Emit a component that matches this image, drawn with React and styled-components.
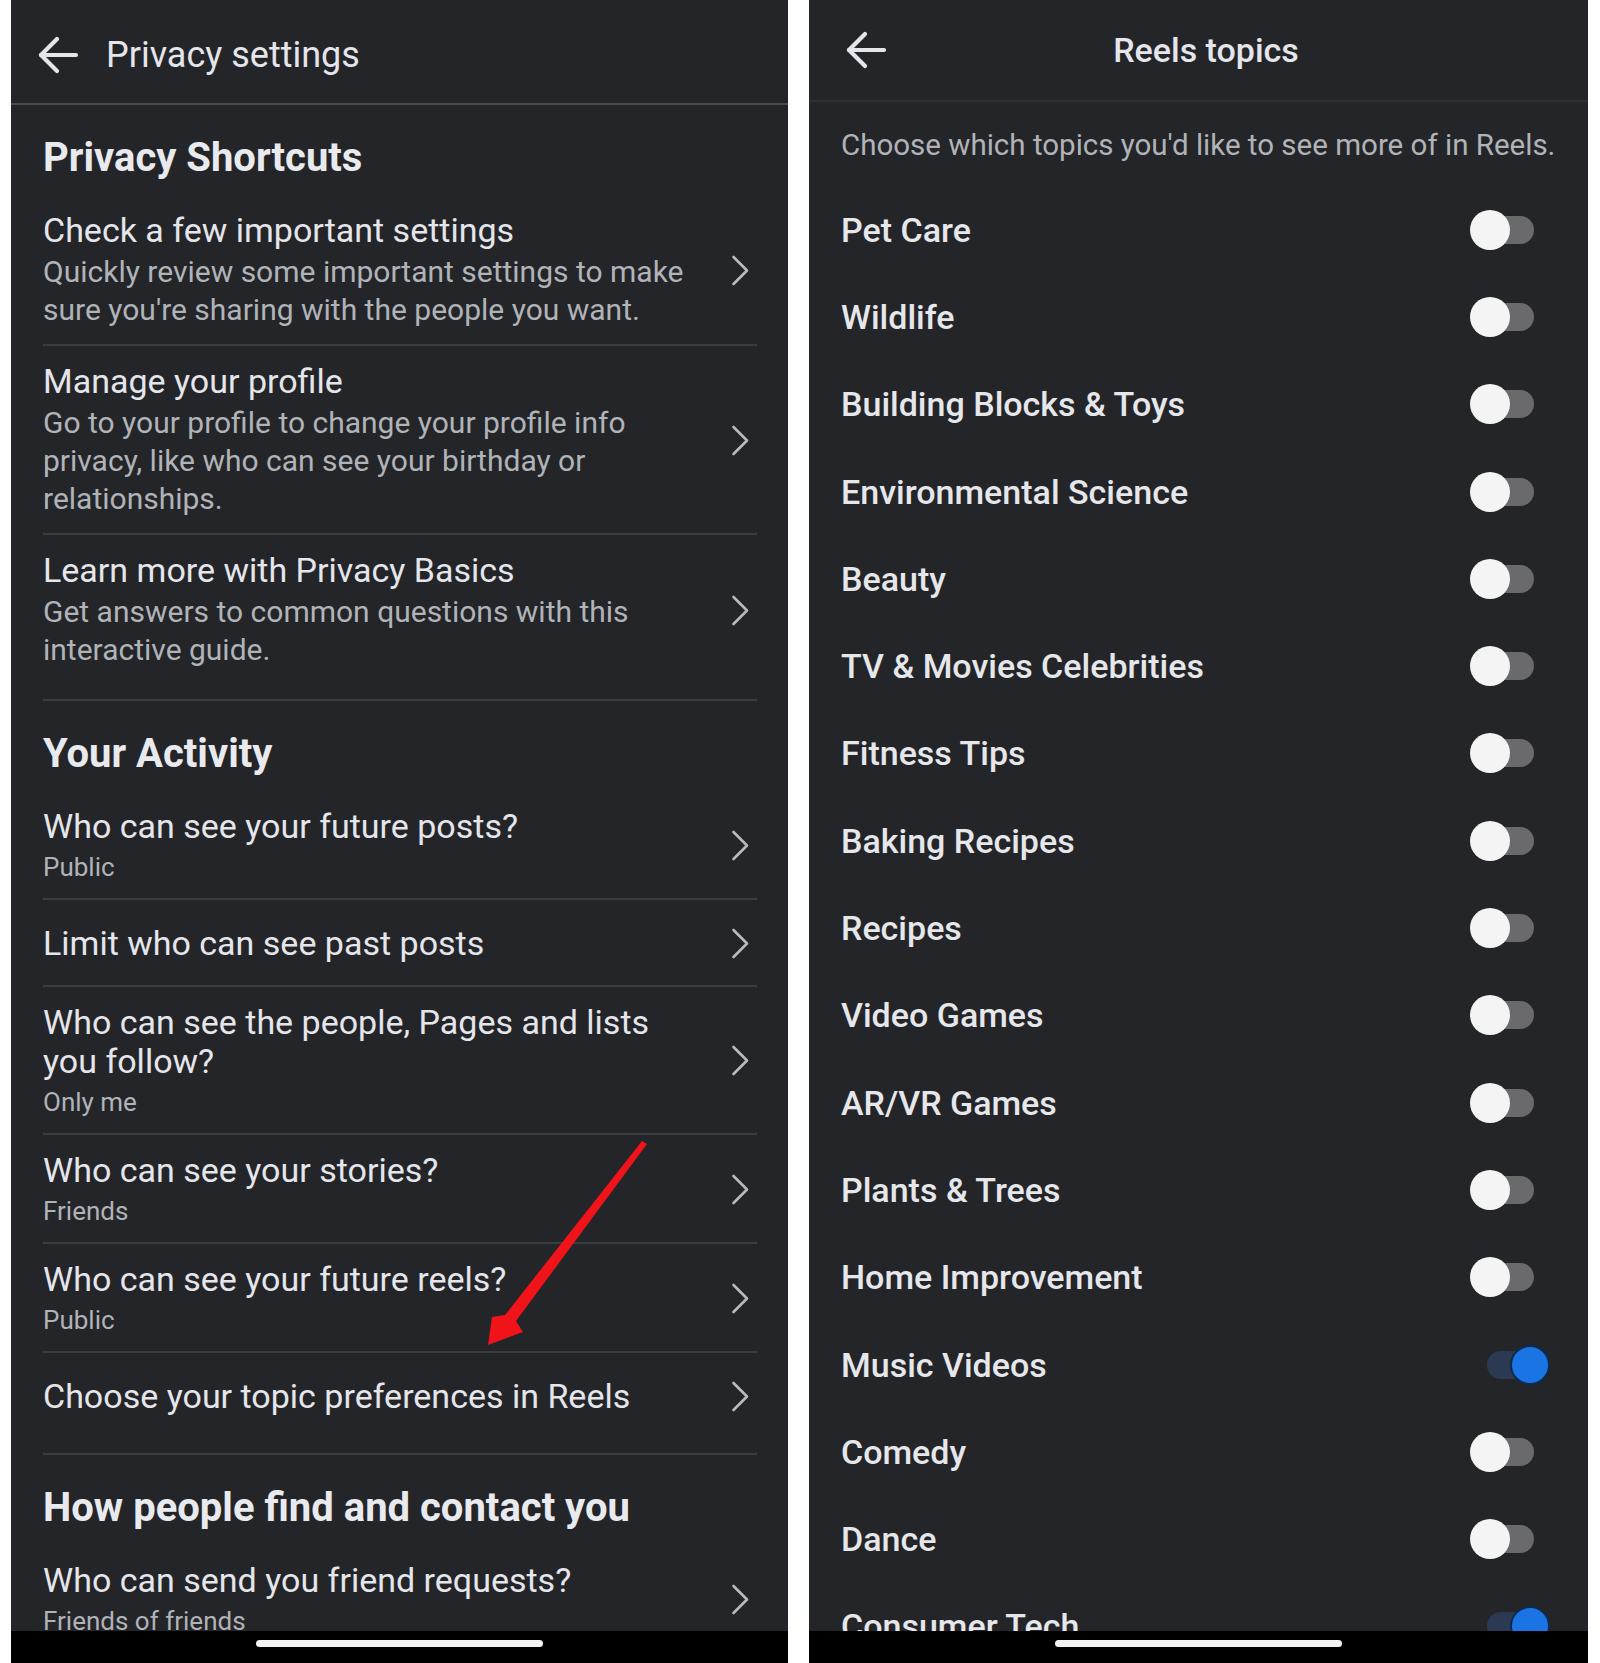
import React from "react";
import styled, { createGlobalStyle } from "styled-components";

const GlobalStyle = createGlobalStyle`
  html, body {
    margin: 0;
    padding: 0;
    background: #ffffff;
  }
  body {
    font-family: Roboto, "Liberation Sans", sans-serif;
    -webkit-font-smoothing: antialiased;
  }
`;

const Page = styled.div`
  display: flex;
  gap: 21px;
  height: 1663px;
  padding-left: 11px;
  background: #ffffff;
`;

const Phone = styled.section`
  position: relative;
  width: ${(p) => p.$width}px;
  height: 100%;
  flex: none;
  display: flex;
  flex-direction: column;
  background: #242528;
  overflow: hidden;
`;

const Screen = styled.div`
  flex: 1;
  min-height: 0;
  overflow: hidden;
`;

const HomeBar = styled.div`
  flex: none;
  height: 32px;
  box-sizing: border-box;
  padding-top: 9px;
  display: flex;
  justify-content: center;
  background: #000000;

  &::after {
    content: "";
    width: 287px;
    height: 7px;
    border-radius: 4px;
    background: #f2f2f2;
  }
`;

const Header = styled.header`
  flex: none;
  box-sizing: border-box;
  height: ${(p) => p.$height}px;
  display: flex;
  align-items: center;
  gap: 27px;
  padding: ${(p) => p.$pad};
  border-bottom: 2px solid ${(p) => p.$line};
`;

const HeaderTitle = styled.h1`
  margin: 0;
  flex: ${(p) => (p.$center ? 1 : "none")};
  text-align: ${(p) => (p.$center ? "center" : "left")};
  font-size: ${(p) => (p.$center ? 34 : 36)}px;
  font-weight: ${(p) => (p.$center ? 500 : 400)};
  line-height: 42px;
  color: #e4e6eb;
`;

const BackIcon = styled.svg`
  flex: none;
  width: 42px;
  height: 38px;
`;

/* ---------- privacy settings ---------- */

const Section = styled.div`
  margin: 0 31px 0 32px;
  padding-bottom: 15px;
  border-bottom: 2px solid #3c3d40;
`;

const SectionTitle = styled.h2`
  margin: 0;
  padding: 31px 0 15px;
  font-size: 40px;
  font-weight: 700;
  line-height: 44px;
  color: #e9eaee;
`;

const Row = styled.div`
  display: flex;
  align-items: center;
  min-height: 54px;
  padding: 16px 0 15px;
  border-bottom: 2px solid #3c3d40;

  &:last-child {
    border-bottom: none;
  }
`;

const RowText = styled.div`
  flex: 1;
  min-width: 0;
`;

const RowTitle = styled.div`
  font-size: 34px;
  line-height: 39px;
  color: #e4e6eb;
`;

const RowNote = styled.div`
  margin-top: ${(p) => (p.$small ? 5 : 3)}px;
  font-size: ${(p) => (p.$small ? 26 : 30)}px;
  line-height: ${(p) => (p.$small ? 32 : 38)}px;
  color: #b0b3b8;
`;

const Chevron = styled.svg`
  flex: none;
  width: 18px;
  height: 31px;
  margin: 0 8px 0 16px;
`;

const Annotation = styled.svg`
  position: absolute;
  left: 0;
  top: 0;
  width: 777px;
  height: 1663px;
  pointer-events: none;
`;

/* ---------- reels topics ---------- */

const Intro = styled.p`
  margin: 0;
  padding: 27px 0 24px 32px;
  font-size: 29.5px;
  line-height: 33px;
  color: #b0b3b8;
  white-space: nowrap;
`;

const TopicRow = styled.div`
  display: flex;
  align-items: center;
  justify-content: space-between;
  height: 87.3px;
  padding: 0 38px 0 32px;
`;

const TopicName = styled.span`
  font-size: 34px;
  font-weight: 500;
  color: #e6e7eb;
`;

const Toggle = styled.span`
  position: relative;
  flex: none;
  width: 80px;
  height: 40px;

  &::before {
    content: "";
    position: absolute;
    left: 17px;
    right: 16px;
    top: 6px;
    bottom: 6px;
    border-radius: 14px;
    background: ${(p) => (p.$on ? "#2b3a52" : "#6a6a6d")};
  }

  &::after {
    content: "";
    position: absolute;
    top: 0;
    width: 40px;
    height: 40px;
    box-sizing: border-box;
    border-radius: 50%;
    ${(p) =>
      p.$on
        ? "right: 0; background: #1b74e4; border: 2px solid #102a4e;"
        : "left: 0; background: #f4f4f4;"}
  }
`;

const Back = () => (
  <BackIcon viewBox="0 0 42 38" fill="none" stroke="#e4e6eb" strokeWidth="4.2" strokeLinecap="round" strokeLinejoin="round">
    <path d="M4 19H39" />
    <path d="M20 3L4 19L20 35" />
  </BackIcon>
);

const Arrow = () => (
  <Chevron viewBox="0 0 18 31" fill="none" stroke="#b9babe" strokeWidth="2.6" strokeLinecap="round" strokeLinejoin="round">
    <path d="M2.5 2L16 15.5L2.5 29" />
  </Chevron>
);

const sections = [
  {
    title: "Privacy Shortcuts",
    rows: [
      {
        title: ["Check a few important settings"],
        desc: ["Quickly review some important settings to make", "sure you're sharing with the people you want."],
      },
      {
        title: ["Manage your profile"],
        desc: ["Go to your profile to change your profile info", "privacy, like who can see your birthday or", "relationships."],
      },
      {
        title: ["Learn more with Privacy Basics"],
        desc: ["Get answers to common questions with this", "interactive guide."],
      },
    ],
  },
  {
    title: "Your Activity",
    rows: [
      { title: ["Who can see your future posts?"], sub: "Public" },
      { title: ["Limit who can see past posts"] },
      { title: ["Who can see the people, Pages and lists", "you follow?"], sub: "Only me" },
      { title: ["Who can see your stories?"], sub: "Friends" },
      { title: ["Who can see your future reels?"], sub: "Public" },
      { title: ["Choose your topic preferences in Reels"] },
    ],
  },
  {
    title: "How people find and contact you",
    rows: [{ title: ["Who can send you friend requests?"], sub: "Friends of friends" }],
  },
];

const topics = [
  ["Pet Care", false],
  ["Wildlife", false],
  ["Building Blocks & Toys", false],
  ["Environmental Science", false],
  ["Beauty", false],
  ["TV & Movies Celebrities", false],
  ["Fitness Tips", false],
  ["Baking Recipes", false],
  ["Recipes", false],
  ["Video Games", false],
  ["AR/VR Games", false],
  ["Plants & Trees", false],
  ["Home Improvement", false],
  ["Music Videos", true],
  ["Comedy", false],
  ["Dance", false],
  ["Consumer Tech", true],
];

const Lines = ({ lines }) =>
  lines.map((line, i) => (
    <React.Fragment key={i}>
      {i > 0 && <br />}
      {line}
    </React.Fragment>
  ));

const PrivacySettings = () => (
  <Phone $width={777}>
    <Header $height={105} $pad="7px 0 0 26px" $line="#4a4b4f">
      <Back />
      <HeaderTitle>Privacy settings</HeaderTitle>
    </Header>
    <Screen>
      {sections.map((section) => (
        <Section key={section.title}>
          <SectionTitle>{section.title}</SectionTitle>
          {section.rows.map((row) => (
            <Row key={row.title[0]}>
              <RowText>
                <RowTitle>
                  <Lines lines={row.title} />
                </RowTitle>
                {row.desc && (
                  <RowNote>
                    <Lines lines={row.desc} />
                  </RowNote>
                )}
                {row.sub && <RowNote $small>{row.sub}</RowNote>}
              </RowText>
              <Arrow />
            </Row>
          ))}
        </Section>
      ))}
    </Screen>
    <HomeBar />
    <Annotation viewBox="0 0 777 1663">
      <polygon
        fill="#f0141a"
        points="631,1141 636,1144 505,1321 512,1332 477,1345 481,1317 494,1315"
      />
    </Annotation>
  </Phone>
);

const ReelsTopics = () => (
  <Phone $width={779}>
    <Header $height={102} $pad="0 90px 0 36px" $line="#2f3033">
      <Back />
      <HeaderTitle $center>Reels topics</HeaderTitle>
    </Header>
    <Screen>
      <Intro>Choose which topics you'd like to see more of in Reels.</Intro>
      {topics.map(([name, on]) => (
        <TopicRow key={name}>
          <TopicName>{name}</TopicName>
          <Toggle $on={on} />
        </TopicRow>
      ))}
    </Screen>
    <HomeBar />
  </Phone>
);

export default function App() {
  return (
    <>
      <GlobalStyle />
      <Page>
        <PrivacySettings />
        <ReelsTopics />
      </Page>
    </>
  );
}
